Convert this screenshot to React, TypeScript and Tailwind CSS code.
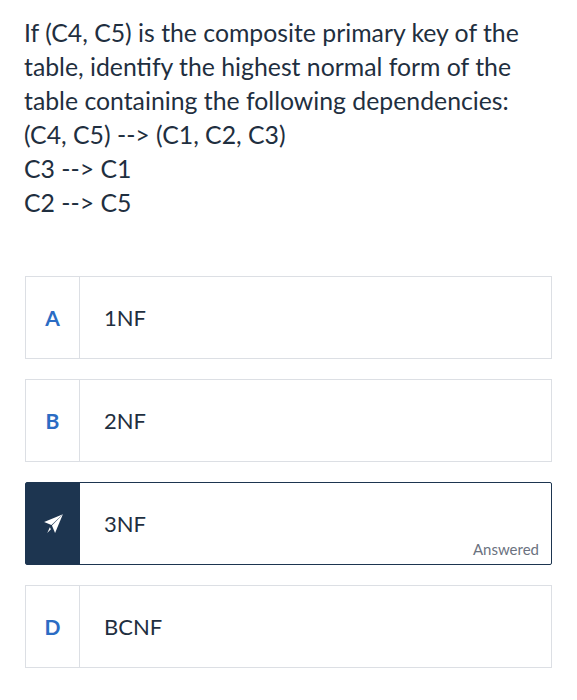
const options = [
  { key: "A", text: "1NF" },
  { key: "B", text: "2NF" },
  { key: "C", text: "3NF", answered: true },
  { key: "D", text: "BCNF" },
]

function PlaneIcon() {
  return (
    <svg viewBox="0 0 24 24" className="h-[25px] w-[25px]" fill="white">
      <path d="M21 3 L3 10.5 L10 13.5 Z" />
      <path d="M21 3 L10.5 14 L13.5 21 Z" />
      <path d="M8.5 15.5 L6 21 L9.5 17.5 Z" />
    </svg>
  )
}

export default function App() {
  return (
    <div className="min-h-screen bg-white font-['Lato',sans-serif] text-[#1f2f40]">
      <div className="px-6 pt-[16px]">
        <p className="text-[24.8px] leading-[34px]">
          If (C4, C5) is the composite primary key of the table, identify the highest normal form of the table containing the following dependencies:
          <br />
          (C4, C5) --&gt; (C1, C2, C3)
          <br />
          C3 --&gt; C1
          <br />
          C2 --&gt; C5
        </p>
      </div>

      <div className="mt-[56px] flex flex-col gap-[20px] px-[25px]">
        {options.map((o) =>
          o.answered ? (
            <div key={o.key} className="flex h-[83px] rounded-[2px] border border-[#1d3550]">
              <div className="flex w-[54px] shrink-0 items-center justify-center bg-[#1d3550]">
                <PlaneIcon />
              </div>
              <div className="relative flex flex-1 items-center pl-[24px]">
                <span className="text-[22px]">{o.text}</span>
                <span className="absolute bottom-[4px] right-[12px] text-[15px] text-[#6b7280]">Answered</span>
              </div>
            </div>
          ) : (
            <div key={o.key} className="flex h-[83px] border border-[#dcdfe4]">
              <div className="flex w-[54px] shrink-0 items-center justify-center border-r border-[#dcdfe4] text-[21px] font-bold text-[#2b6cc4]">
                {o.key}
              </div>
              <div className="flex flex-1 items-center pl-[24px]">
                <span className="text-[22px]">{o.text}</span>
              </div>
            </div>
          )
        )}
      </div>
    </div>
  )
}
